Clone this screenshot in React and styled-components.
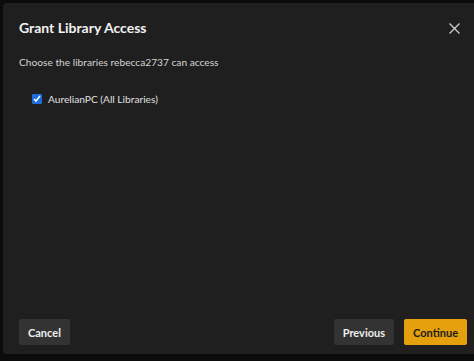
import React from 'react';
import styled, { createGlobalStyle } from 'styled-components';

const Global = createGlobalStyle`
  html, body {
    margin: 0;
    padding: 0;
    background: #0b0b0b;
    overflow: hidden;
    font-family: Lato, 'Open Sans', sans-serif;
  }
`;

const Page = styled.div`
  width: 474px;
  height: 361px;
  padding: 3px 0 0 3px;
  box-sizing: border-box;
`;

const Dialog = styled.div`
  width: 480px;
  height: 351px;
  background: #1f1f1f;
  border-radius: 4px;
  display: flex;
  flex-direction: column;
  box-sizing: border-box;
  padding: 0 16px 9px 16px;
`;

const Header = styled.div`
  display: flex;
  align-items: center;
  justify-content: space-between;
  padding-top: 15px;
  height: 20px;
`;

const Title = styled.h2`
  margin: 0;
  font-size: 14px;
  font-weight: 700;
  color: #f2f2f2;
  line-height: 20px;
`;

const Close = styled.button`
  border: 0;
  background: none;
  padding: 0;
  margin-right: 6px;
  width: 14px;
  height: 14px;
  display: flex;
  align-items: center;
  justify-content: center;
  color: #cfcfcf;
`;

const Body = styled.div`
  flex: 1;
  padding-top: 16px;
`;

const Subtitle = styled.p`
  margin: 0;
  font-size: 10.2px;
  line-height: 16px;
  color: #d4d4d4;
`;

const Option = styled.label`
  display: flex;
  align-items: center;
  gap: 6px;
  margin: 21px 0 0 13px;
  font-size: 10.2px;
  line-height: 16px;
  color: #e0e0e0;
`;

const Box = styled.input`
  width: 10px;
  height: 10px;
  margin: 0;
  accent-color: #1a6fe0;
`;

const Footer = styled.div`
  display: flex;
  align-items: center;
  gap: 10px;
`;

const Spacer = styled.div`
  flex: 1;
`;

const Button = styled.button`
  height: 26px;
  padding: 0 9px;
  border: 0;
  border-radius: 2px;
  font-family: inherit;
  font-size: 11px;
  font-weight: 700;
  background: ${p => (p.$primary ? '#e5a00d' : '#333333')};
  color: ${p => (p.$primary ? '#1c1c1c' : '#eeeeee')};
`;

const App = () => (
  <Page>
    <Global />
    <Dialog>
      <Header>
        <Title>Grant Library Access</Title>
        <Close aria-label="Close">
          <svg width="11" height="11" viewBox="0 0 11 11">
            <path d="M0.5 0.5 L10.5 10.5 M10.5 0.5 L0.5 10.5" stroke="currentColor" strokeWidth="1.3" />
          </svg>
        </Close>
      </Header>
      <Body>
        <Subtitle>Choose the libraries rebecca2737 can access</Subtitle>
        <Option>
          <Box type="checkbox" defaultChecked />
          AurelianPC (All Libraries)
        </Option>
      </Body>
      <Footer>
        <Button>Cancel</Button>
        <Spacer />
        <Button>Previous</Button>
        <Button $primary>Continue</Button>
      </Footer>
    </Dialog>
  </Page>
);

export default App;
